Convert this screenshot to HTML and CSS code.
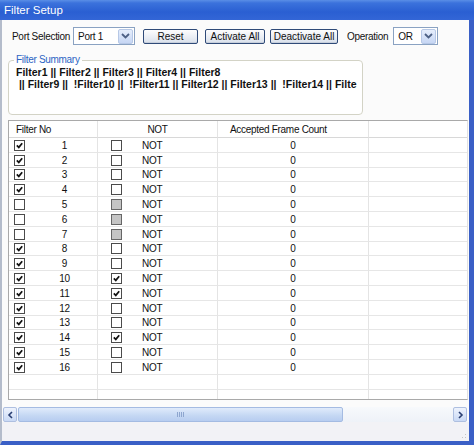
FILE: index.html
```html
<!DOCTYPE html>
<html>
<head>
<meta charset="utf-8">
<link rel="stylesheet" href="styles.css">
</head>
<body>
<div class="window">
  <div class="titlebar">Filter Setup</div>
  <div class="frame">
    <div class="toolbar">
      <span class="lbl">Port Selection</span>
      <div class="combo port"><span class="val">Port 1</span><span class="dd"><svg width="9" height="6" viewBox="0 0 9 6"><path d="M1 1 L4.5 4.5 L8 1" fill="none" stroke="#4d6185" stroke-width="1.8"/></svg></span></div>
      <button class="btn reset">Reset</button>
      <button class="btn act">Activate All</button>
      <button class="btn deact">Deactivate All</button>
      <span class="lbl op">Operation</span>
      <div class="combo or"><span class="val">OR</span><span class="dd"><svg width="9" height="6" viewBox="0 0 9 6"><path d="M1 1 L4.5 4.5 L8 1" fill="none" stroke="#4d6185" stroke-width="1.8"/></svg></span></div>
    </div>
    <fieldset class="summary">
      <legend>Filter Summary</legend>
      <div class="sumtext">Filter1 || Filter2 || Filter3 || Filter4 || Filter8<br>&nbsp;|| Filter9 ||&nbsp; !Filter10 ||&nbsp; !Filter11 || Filter12 || Filter13 ||&nbsp; !Filter14 || Filte</div>
    </fieldset>
    <div class="grid" id="grid">
      <div class="row head">
        <div class="c c1">Filter No</div>
        <div class="c c2">NOT</div>
        <div class="c c3">Accepted Frame Count</div>
        <div class="c c4"></div>
      </div>
    </div>
    <div class="hscroll">
      <div class="arrow"><svg width="7" height="8" viewBox="0 0 7 8"><path d="M5 1 L2 4 L5 7" fill="none" stroke="#2a3f73" stroke-width="1.6"/></svg></div>
      <div class="track"><div class="thumb"><span class="grip"></span></div></div>
      <div class="arrow"><svg width="7" height="8" viewBox="0 0 7 8"><path d="M2 1 L5 4 L2 7" fill="none" stroke="#2a3f73" stroke-width="1.6"/></svg></div>
    </div>
    <div class="footer"><span class="resize"></span></div>
  </div>
</div>
<script src="app.js"></script>
</body>
</html>
```
FILE: app.js
```js
(function () {
  var en = [1,1,1,1,0,0,0,1,1,1,1,1,1,1,1,1];
  var not = [0,0,0,0,2,2,2,0,0,1,1,0,0,1,0,0];
  var check = '<svg width="7" height="7" viewBox="0 0 7 7"><path d="M0.8 3.4 L2.8 5.4 L6.2 1.2" fill="none" stroke="#111" stroke-width="1.7"/></svg>';
  function box(state) {
    var cls = 'cb' + (state === 2 ? ' dis' : '');
    return '<span class="' + cls + '">' + (state === 1 ? check : '') + '</span>';
  }
  var grid = document.getElementById('grid');
  var html = '';
  for (var i = 0; i < 16; i++) {
    html += '<div class="row">' +
      '<div class="c c1">' + box(en[i]) + '<span class="num">' + (i + 1) + '</span></div>' +
      '<div class="c c2">' + box(not[i]) + '<span class="nt">NOT</span></div>' +
      '<div class="c c3">0</div>' +
      '<div class="c c4"></div></div>';
  }
  for (var j = 0; j < 2; j++) {
    html += '<div class="row"><div class="c c1"></div><div class="c c2"></div><div class="c c3"></div><div class="c c4"></div></div>';
  }
  grid.insertAdjacentHTML('beforeend', html);
})();
```
FILE: styles.css
```css
* { box-sizing: border-box; }
html, body { margin: 0; padding: 0; }
body {
  font-family: "Liberation Sans", Arial, sans-serif;
  font-size: 10px;
  letter-spacing: -0.3px;
  color: #111;
  background: #fff;
}
.window {
  width: 474px;
  height: 445px;
  display: flex;
  flex-direction: column;
  overflow: hidden;
}
.titlebar {
  height: 20px;
  flex: none;
  background: linear-gradient(#5a8ee6 0, #3b72dc 3px, #2a5fd2 60%, #3366d6 100%);
  color: #fff;
  font-size: 11.5px;
  line-height: 20px;
  padding-left: 4px;
  letter-spacing: 0;
}
.frame {
  flex: 1;
  display: flex;
  flex-direction: column;
  border-left: 2px solid #b4bccb;
  border-right: 5px solid #3a5fc6;
  border-bottom: 4px solid #3a5fc6;
  background: #fbfbfb;
  min-height: 0;
}
.toolbar {
  display: flex;
  align-items: center;
  height: 18px;
  margin-top: 7px;
  padding-left: 10px;
}
.lbl { white-space: nowrap; }
.combo {
  height: 18px;
  border: 1px solid #8aa2c2;
  background: #fff;
  display: flex;
  align-items: center;
  justify-content: space-between;
  padding: 1px;
}
.combo .val { padding-left: 3px; }
.combo .dd {
  width: 15px;
  height: 15px;
  border: 1px solid #b7c8e6;
  border-radius: 2px;
  background: linear-gradient(#e6eefc, #c6d6f4);
  display: flex;
  align-items: center;
  justify-content: center;
}
.port { width: 62px; margin-left: 3px; }
.or { width: 45px; margin-left: 5px; }
.btn {
  font: inherit;
  color: #111;
  height: 15px;
  padding: 0;
  border: 1px solid #2f4a78;
  border-radius: 2px;
  background: linear-gradient(#fdfdfd, #e8ecf3 60%, #d8dfea);
  box-shadow: inset 0 -1px 0 #c7cfdc;
  line-height: 13px;
}
.reset { width: 55px; margin-left: 8px; }
.act { width: 60px; margin-left: 7px; }
.deact { width: 68px; margin-left: 5px; }
.op { margin-left: 9px; }
.summary {
  margin: 9px 0 0 6px;
  width: 355px;
  height: 61px;
  border: 1px solid #d3d3c6;
  border-radius: 4px;
  padding: 0 4px 0 7px;
  overflow: hidden;
  min-inline-size: 0;
  background: #fff;
}
.summary legend {
  color: #2b64c4;
  padding: 0 2px;
  margin-left: -2px;
  line-height: 12px;
}
.sumtext {
  font-weight: bold;
  font-size: 10.5px;
  letter-spacing: 0;
  line-height: 12px;
  white-space: nowrap;
}
.grid {
  margin: 5px 1px 0 6px;
  height: 280px;
  border: 1px solid #a9a9a9;
  border-right-color: #e2e2e2;
  background: #fff;
  overflow: hidden;
  flex: none;
}
.row {
  display: grid;
  grid-template-columns: 89px 120px 151px 1fr;
  height: 14.8px;
}
.row.head { height: 17px; }
.c {
  border-right: 1px solid #e4e4e4;
  border-bottom: 1px solid #e6e6e6;
  display: flex;
  align-items: center;
  white-space: nowrap;
  overflow: hidden;
}
.head .c { border-bottom-color: #d8d8d8; }
.head .c1 { padding-left: 7px; }
.head .c2 { justify-content: center; }
.head .c3 { padding-left: 12px; }
.row:not(.head) .c3 { justify-content: center; }
.row:not(.head) .c { padding-top: 1px; }
.c4 { border-right: none; }
.cb {
  width: 11px;
  height: 11px;
  border: 1px solid #4b4b4b;
  background: #fff;
  display: inline-flex;
  align-items: center;
  justify-content: center;
  flex: none;
}
.cb.dis { background: #c4c4c4; border-color: #666; }
.c1 .cb { margin-left: 5px; }
.num { flex: 1; text-align: center; margin-left: 7px; }
.c2 .cb { margin-left: 13px; }
.nt { margin-left: 20px; }
.hscroll {
  margin: 7px 2px 0 1px;
  height: 15px;
  display: flex;
  flex: none;
  background: #f3f6fb;
}
.arrow {
  width: 14px;
  height: 15px;
  border: 1px solid #aebfe0;
  border-radius: 2px;
  background: linear-gradient(#eef3fd, #c9d9f5);
  display: flex;
  align-items: center;
  justify-content: center;
  flex: none;
}
.track {
  flex: 1;
  padding: 0 1px;
  background: linear-gradient(#f7f9fc, #eef2f8);
}
.thumb {
  width: 325px;
  height: 15px;
  border: 1px solid #a4bbe2;
  border-radius: 2px;
  background: linear-gradient(#e0ebfb, #c4d7f3 60%, #b7cdf0);
  display: flex;
  align-items: center;
  justify-content: center;
}
.grip {
  width: 7px;
  height: 5px;
  background: repeating-linear-gradient(90deg, #8ea6cf 0 1px, transparent 1px 2px);
}
.footer {
  flex: 1;
  background: #f2f2f6;
  position: relative;
}
.resize {
  position: absolute;
  right: 1px;
  bottom: 1px;
  width: 10px;
  height: 10px;
  background: radial-gradient(circle, #c4c4c4 0.8px, transparent 1px) 0 0 / 3px 3px;
  clip-path: polygon(100% 0, 100% 100%, 0 100%);
}
```
